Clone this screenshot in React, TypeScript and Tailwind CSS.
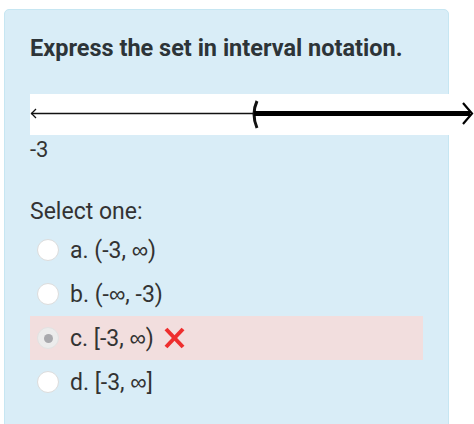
import React from "react";

function Radio({ checked }: { checked?: boolean }) {
  return (
    <div
      className={
        "w-[22px] h-[22px] rounded-full flex items-center justify-center shrink-0 " +
        (checked ? "bg-[#ececec] border border-[#e2e2e2]" : "bg-white border border-[#dcdcdc]")
      }
    >
      {checked && <div className="w-[9px] h-[9px] rounded-full bg-[#a9a9ad]" />}
    </div>
  );
}

function NumberLine() {
  return (
    <div className="w-[444px] h-[41px] bg-white">
      <svg width="444" height="41" viewBox="0 0 444 41">
        <line x1="1" y1="19.5" x2="224" y2="19.5" stroke="#111" strokeWidth="1.3" />
        <polyline points="6,15 1.5,19.5 6,24" fill="none" stroke="#111" strokeWidth="1.3" />
        <path d="M227 7 Q221 20 227 34" fill="none" stroke="#111" strokeWidth="3" />
        <line x1="224" y1="19.5" x2="440" y2="19.5" stroke="#000" strokeWidth="5" />
        <polyline points="433,9 442,19.5 433,30" fill="none" stroke="#000" strokeWidth="2.2" />
      </svg>
    </div>
  );
}

function XMark() {
  return (
    <svg width="21" height="22" viewBox="0 0 21 22" className="ml-[10px]">
      <path d="M2 2 L19 20" stroke="#ee2e2e" strokeWidth="4" strokeLinecap="butt" />
      <path d="M19 2 L2 20" stroke="#ee2e2e" strokeWidth="4" strokeLinecap="butt" />
    </svg>
  );
}

function Inf() {
  return <span style={{ fontFamily: "'Liberation Sans', sans-serif" }}>∞</span>;
}

const options: { key: string; label: React.ReactNode; checked?: boolean; wrong?: boolean }[] = [
  { key: "a", label: <>a. (-3, <Inf />)</> },
  { key: "b", label: <>b. (-<Inf />, -3)</> },
  { key: "c", label: <>c. [-3, <Inf />)</>, checked: true, wrong: true },
  { key: "d", label: <>d. [-3, <Inf />]</> },
];

export default function App() {
  return (
    <div
      className="w-[474px] h-[424px] bg-white pt-[9px] pl-[4px] overflow-hidden text-[#333]"
      style={{ fontFamily: "Roboto, 'Liberation Sans', sans-serif" }}
    >
      <div className="w-[445px] h-[430px] bg-[#d9edf7] border border-[#c6e6f2] rounded-t-[5px] pl-[25px] pt-[24px]">
        <div className="text-[23.5px] font-bold leading-[28px] text-[#2d3438]">
          Express the set in interval notation.
        </div>
        <div className="mt-[32px]">
          <NumberLine />
        </div>
        <div className="text-[22px] leading-[24px] mt-[3px]">-3</div>
        <div className="text-[23px] leading-[26px] mt-[37px]">Select one:</div>
        <div className="mt-[3px] flex flex-col">
          {options.map((o) => (
            <div
              key={o.key}
              className={
                "w-[393px] h-[44px] flex items-center pl-[7px] " + (o.wrong ? "bg-[#f2dede]" : "")
              }
            >
              <Radio checked={o.checked} />
              <span className="ml-[11px] text-[23px] leading-[26px]">{o.label}</span>
              {o.wrong && <XMark />}
            </div>
          ))}
        </div>
      </div>
    </div>
  );
}
